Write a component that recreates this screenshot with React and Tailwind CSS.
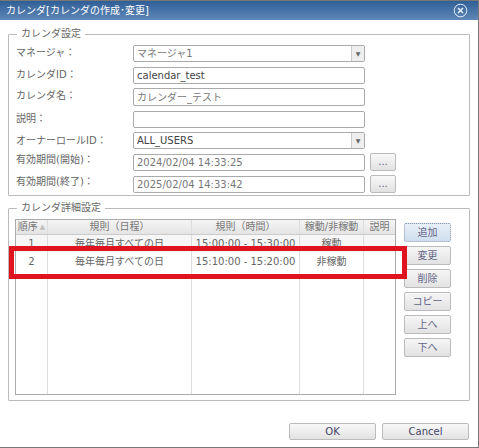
import React from "react";

const font = { fontFamily: '"DejaVu Sans", "Noto Sans CJK JP", sans-serif' };

function Field({ label, value, select, dots, box = "h-[17px]", muted, cls = "", lift = "-mt-[2px]" }) {
  return (
    <div className={`flex items-center ${cls}`}>
      <div className={`w-[124px] pl-[7px] text-[10px] leading-none text-[#666] ${dots ? "-mt-[5px]" : lift}`}>{label}</div>
      <div className={`flex ${box} w-[232px] items-center justify-between rounded-[2px] border border-[#aaa] bg-white pl-[3px] text-[10px] ${muted ? "text-[#777]" : "text-[#444]"}`}>
        <span className="truncate">{value}</span>
        {select && (
          <span className="flex h-full w-[13px] items-center justify-center border-l border-[#ccc] bg-[#eee] text-[6px] text-[#666]">▼</span>
        )}
      </div>
      {dots && (
        <button className="ml-[5px] h-[18px] w-[26px] rounded-[2px] border border-[#bbb] bg-gradient-to-b from-[#f8f8f8] to-[#e2e2e2] text-[10px] leading-none text-[#668]">...</button>
      )}
    </div>
  );
}

function SideButton({ children, active }) {
  return (
    <button className={`h-[19px] w-[47px] rounded-[2px] border text-[10px] leading-none text-[#668] bg-gradient-to-b ${active ? "border-dotted border-[#89a] from-[#e8f0f8] to-[#cfdeee]" : "border-[#bbb] from-[#f6f6f6] to-[#e2e2e2]"}`}>
      {children}
    </button>
  );
}

const widths = ["w-[32px]", "w-[144px]", "w-[108px]", "w-[64px]", "flex-1"];
const colCls = "border-r border-[#ddd] last:border-r-0";

function Row({ cells, h, bg = "" }) {
  return (
    <div className={`flex ${h} ${bg} items-center whitespace-nowrap text-[10px] text-[#666]`}>
      {cells.map((c, i) => (
        <div key={i} className={`flex h-full items-center justify-center ${widths[i]} ${colCls}`}>{c}</div>
      ))}
    </div>
  );
}

export default function App() {
  const heads = [
    <>順序<span className="ml-[2px] text-[7px] text-[#bbb]">▲</span></>,
    "規則（日程）",
    "規則（時間）",
    "稼動/非稼動",
    "説明",
  ];
  return (
    <div style={font} className="relative h-[448px] w-[479px] overflow-hidden bg-[#777]">
      <div className="mt-px h-[446px] w-[478px] bg-white">
        <div className="flex h-[19px] items-center justify-between bg-gradient-to-b from-[#2f5f97] to-[#5f87b7] pl-[6px] pr-[10px] text-[10px] text-white">
          <span>カレンダ[カレンダの作成･変更]</span>
          <svg width="15" height="15" viewBox="0 0 15 15" fill="none" stroke="#e6eef8" strokeWidth="1">
            <circle cx="7.5" cy="7.5" r="6.3" />
            <path d="M5 5l5 5M10 5l-5 5" strokeWidth="1.6" />
          </svg>
        </div>

        <fieldset className="relative ml-[8px] mt-[14px] h-[162px] w-[462px] rounded-[1px] border border-[#bbb]">
          <span className="absolute left-[8px] top-[-8px] bg-white px-[4px] text-[10px] leading-[14px] text-[#666]">カレンダ設定</span>
          <div className="flex flex-col pt-[10px]">
            <Field label="マネージャ：" value="マネージャ1" select muted />
            <Field cls="mt-[5px]" label="カレンダID：" value="calendar_test" />
            <Field cls="mt-[4px]" box="h-[18px]" label="カレンダ名：" value="カレンダー_テスト" muted />
            <Field cls="mt-[5px]" label="説明：" value="" />
            <Field cls="mt-[4px]" lift="mt-0" label="オーナーロールID：" value="ALL_USERS" select />
            <Field cls="mt-[4px]" label="有効期間(開始)：" value="2024/02/04 14:33:25" dots muted />
            <Field cls="mt-[4px]" label="有効期間(終了)：" value="2025/02/04 14:33:42" dots muted />
          </div>
        </fieldset>

        <fieldset className="relative ml-[8px] mt-[12px] h-[193px] w-[462px] rounded-[1px] border border-[#bbb]">
          <span className="absolute left-[8px] top-[-8px] bg-white px-[4px] text-[10px] leading-[14px] text-[#666]">カレンダ詳細設定</span>
          <div className="flex pl-[6px] pt-[10px]">
            <div className="h-[176px] w-[381px] overflow-hidden border border-[#aaa]">
              <div className="flex h-[15px] border-b border-[#ccc] bg-gradient-to-b from-[#f5f5f5] to-[#e4e4e4] text-[10px] leading-[14px] text-[#777]">
                {heads.map((c, i) => (
                  <div key={i} className={`flex h-full items-center justify-center whitespace-nowrap ${widths[i]} ${colCls}`}>{c}</div>
                ))}
              </div>
              <Row h="h-[17px]" bg="bg-[#f6f6f6]" cells={["1", "毎年毎月すべての日", "15:00:00 - 15:30:00", "稼動", ""]} />
              <Row h="h-[19px]" cells={["2", "毎年毎月すべての日", "15:10:00 - 15:20:00", "非稼動", ""]} />
              <Row h="h-[123px]" cells={["", "", "", "", ""]} />
            </div>
            <div className="ml-[8px] mt-[4px] flex flex-col gap-[4px]">
              <SideButton active>追加</SideButton>
              <SideButton>変更</SideButton>
              <SideButton>削除</SideButton>
              <SideButton>コピー</SideButton>
              <SideButton>上へ</SideButton>
              <SideButton>下へ</SideButton>
            </div>
          </div>
        </fieldset>

        <div className="mt-[22px] flex justify-end gap-[6px] pr-[9px]">
          <button className="h-[17px] w-[87px] rounded-[2px] border border-[#bbb] bg-gradient-to-b from-[#f8f8f8] to-[#e2e2e2] text-[10px] leading-none text-[#446]">OK</button>
          <button className="h-[17px] w-[87px] rounded-[2px] border border-[#bbb] bg-gradient-to-b from-[#f8f8f8] to-[#e2e2e2] text-[10px] leading-none text-[#446]">Cancel</button>
        </div>
      </div>

      {/* red highlight drawn over the table */}
      <div className="absolute left-[9px] top-[246px] h-[33px] w-[398px] border-[5px] border-[#e0141e]" />
    </div>
  );
}
